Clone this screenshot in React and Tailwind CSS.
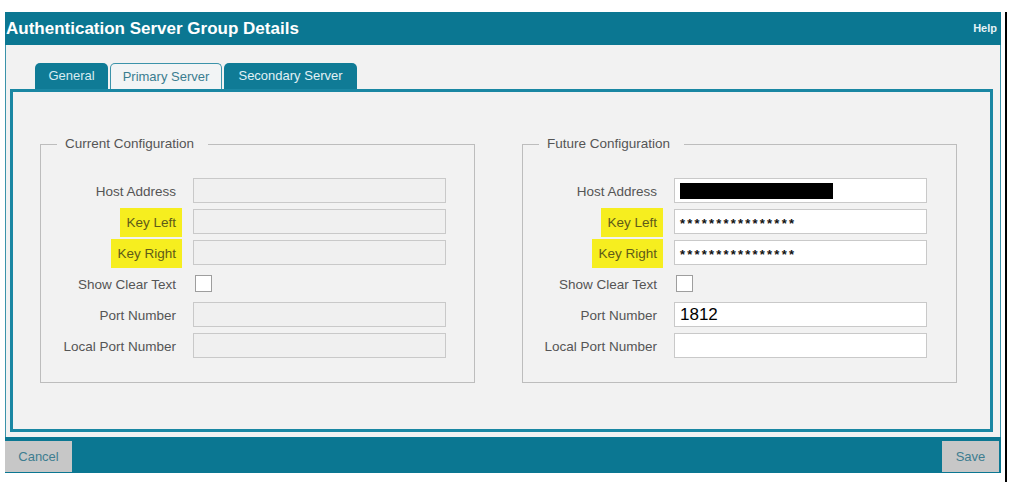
const font = { fontFamily: '"Liberation Sans", Arial, sans-serif' }

const ROWS = ['Host Address', 'Key Left', 'Key Right', 'Show Clear Text', 'Port Number', 'Local Port Number']

function Label({ text, mark }) {
  if (!mark) return <span className="text-[13.5px] text-[#555]">{text}</span>
  return (
    <span className="-mr-[6px] bg-[#f6ee1f] px-[6px] py-[7px] text-[13.5px] text-[#5e5b1a]">{text}</span>
  )
}

function Field({ kind, value, disabled }) {
  const base = `h-[25px] w-[253px] border border-[#c9c9c9] ${disabled ? 'bg-[#f0f0f0]' : 'bg-white'}`
  if (kind === 'box') {
    return <div className="ml-[2px] h-[17px] w-[17px] border border-[#9e9e9e] bg-white" />
  }
  return (
    <div className={`${base} flex items-center pl-[5px]`}>
      {kind === 'bar' && <div className="h-[16px] w-[153px] bg-black" />}
      {kind === 'stars' && (
        <span className="pt-[3px] text-[13px] font-bold leading-none tracking-[2.2px] text-[#111]">****************</span>
      )}
      {kind === 'num' && <span className="text-[17px] leading-none text-black">{value}</span>}
    </div>
  )
}

function Config({ title, future }) {
  const kinds = future
    ? ['bar', 'stars', 'stars', 'box', 'num', 'text']
    : ['text', 'text', 'text', 'box', 'text', 'text']
  return (
    <fieldset className="h-[249px] w-[435px] border border-[#bdbdbd] px-0">
      <legend className="ml-[16px] pl-[8px] pr-[14px] text-[13.5px] text-[#555]">{title}</legend>
      <div className="mt-[24px] flex flex-col gap-[6px]">
        {ROWS.map((r, i) => (
          <div key={r} className="flex h-[25px] items-center">
            <div className={`${future ? 'w-[134px]' : 'w-[135px]'} text-right`}>
              <Label text={r} mark={i === 1 || i === 2} />
            </div>
            <div className="ml-[17px]">
              <Field kind={kinds[i]} value="1812" disabled={!future} />
            </div>
          </div>
        ))}
      </div>
    </fieldset>
  )
}

export default function App() {
  return (
    <div style={font} className="h-[485px] w-[1022px] overflow-hidden bg-white pt-[12px]">
      <div className="flex">
        <div className="ml-[5px] flex w-[996px] flex-col">
          <div className="flex h-[33px] items-center justify-between bg-[#0b7792] pl-[1px] pr-[4px]">
            <span className="text-[17px] font-bold text-white">Authentication Server Group Details</span>
            <span className="text-[11px] font-bold text-[#e6f3f6]">Help</span>
          </div>
          <div className="h-[392px] border-x border-[#3b93aa] bg-[#f2f2f2] pl-[4px] pr-[7px] pt-[18px]">
            <div className="ml-[25px] flex items-end gap-[2px]">
              <div className="flex h-[26px] w-[73px] items-center justify-center rounded-t-[5px] bg-[#0f7b96] text-[13px] text-[#d8ecf1]">General</div>
              <div className="flex h-[26px] w-[112px] items-center justify-center rounded-t-[5px] border-x border-t border-[#3b93aa] bg-[#f2f4f5] text-[13px] text-[#3a7d90]">Primary Server</div>
              <div className="flex h-[26px] w-[133px] items-center justify-center rounded-t-[5px] bg-[#0f7b96] text-[13px] text-[#e2f1f5]">Secondary Server</div>
            </div>
            <div className="h-[343px] border-[3px] border-[#1a87a3] bg-[#f2f2f2] pl-[27px] pt-[42px]">
              <div className="flex gap-[47px]">
                <Config title="Current Configuration" />
                <Config title="Future Configuration" future />
              </div>
            </div>
          </div>
          <div className="flex h-[36px] items-end justify-between bg-[#0b7792] pb-[1px] pr-[2px]">
            <div className="flex h-[31px] w-[67px] items-center justify-center bg-[#c7c7c7] text-[13px] text-[#3e7d90]">Cancel</div>
            <div className="flex h-[31px] w-[57px] items-center justify-center bg-[#c7c7c7] text-[13px] text-[#3e7d90]">Save</div>
          </div>
        </div>
        <div className="ml-[4px] h-[470px] w-[2px] bg-black" />
      </div>
    </div>
  )
}
